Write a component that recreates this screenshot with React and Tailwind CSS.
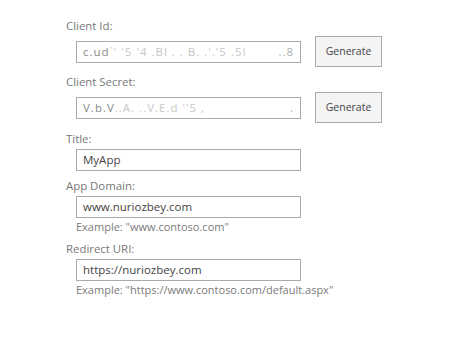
const font = { fontFamily: '"Open Sans", "Noto Sans", sans-serif' };

const Label = ({ children }) => (
  <div className="text-[11.4px] leading-[18px] text-[#777777] mb-px">{children}</div>
);

const Hint = ({ children }) => (
  <div className="ml-[10px] text-[11px] leading-[18px] text-[#7a7a7a]">{children}</div>
);

const TextBox = ({ children }) => (
  <div className="w-[225px] h-[22px] border border-[#ababab] bg-white px-[6px] flex items-center text-[11.5px] text-[#444444] overflow-hidden whitespace-nowrap">
    {children}
  </div>
);

// obscured secret values: only faint fragments are readable
const Masked = ({ head, body, tail }) => (
  <span className="flex w-full justify-between tracking-[1px]">
    <span>
      <span className="text-[#8a8a8a]">{head}</span>
      <span className="text-[#c8c8c8]">{body}</span>
    </span>
    <span className="text-[#b0b0b0]">{tail}</span>
  </span>
);

const GenRow = ({ children }) => (
  <div className="flex items-center ml-[10px]">
    <TextBox>{children}</TextBox>
    <button className="ml-[14px] w-[67px] h-[31px] border border-[#ababab] bg-[#f4f4f4] text-[10.5px] text-[#444444]">
      Generate
    </button>
  </div>
);

export default function App() {
  return (
    <div className="w-[455px] h-[358px] bg-white pl-[66px] pt-[17px]" style={font}>
      <Label>Client Id:</Label>
      <GenRow>
        <Masked head="c.ud" body={"`' '5 '4 .Bl    .    .   B.  .'.'5  .5l"} tail="..8" />
      </GenRow>
      <div className="h-[6px]" />
      <Label>Client Secret:</Label>
      <GenRow>
        <Masked head="V.b.V" body={"..A.  ..V.E.d ''5  ,"} tail="." />
      </GenRow>
      <div className="h-[7px]" />
      <Label>Title:</Label>
      <div className="ml-[10px]">
        <TextBox>MyApp</TextBox>
      </div>
      <div className="h-[6px]" />
      <Label>App Domain:</Label>
      <div className="ml-[10px]">
        <TextBox>www.nuriozbey.com</TextBox>
      </div>
      <Hint>Example: "www.contoso.com"</Hint>
      <div className="h-[4px]" />
      <Label>Redirect URI:</Label>
      <div className="ml-[10px]">
        <TextBox>https://nuriozbey.com</TextBox>
      </div>
      <Hint>Example: "https://www.contoso.com/default.aspx"</Hint>
    </div>
  );
}
